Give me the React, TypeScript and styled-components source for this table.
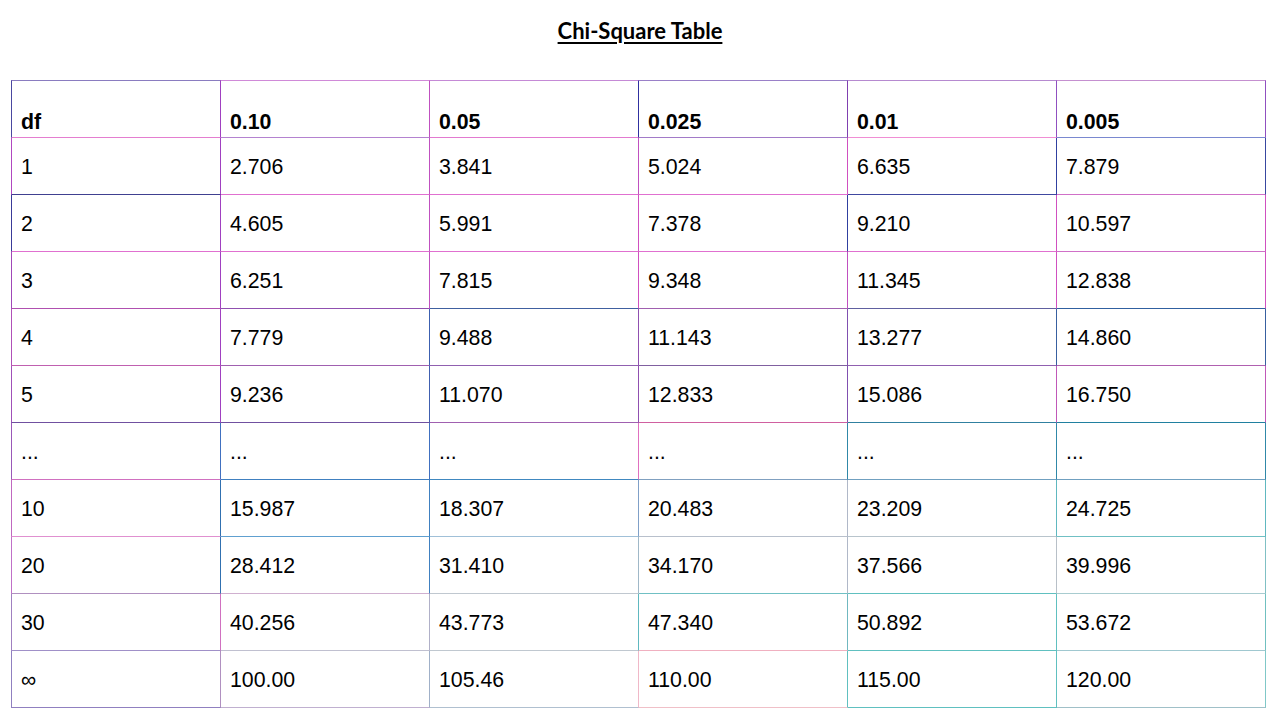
import React from "react";
import styled, { createGlobalStyle } from "styled-components";

const Global = createGlobalStyle`
  html, body { margin: 0; padding: 0; background: #ffffff; }
  body { width: 1280px; height: 720px; overflow: hidden; }
`;

const Page = styled.div`
  width: 1280px;
  height: 720px;
  display: flex;
  flex-direction: column;
  align-items: flex-start;
  background: #fff;
`;

const Title = styled.h1`
  align-self: center;
  margin: 17px 0 0 0;
  height: 28px;
  font-family: "Lato", "Open Sans", sans-serif;
  font-weight: 700;
  font-size: 22px;
  line-height: 28px;
  color: #000;
  text-decoration: underline;
  text-decoration-thickness: 2px;
  text-underline-offset: 3px;
`;

const Grid = styled.div`
  margin: 35px 0 0 11px;
  display: grid;
  grid-template-columns: 210px repeat(5, 209px);
  grid-template-rows: 58px repeat(10, 57px);
`;

const Cell = styled.div<{
  $right: string;
  $bottom: string;
  $left?: string;
  $top?: string;
  $head?: boolean;
}>`
  box-sizing: border-box;
  display: flex;
  align-items: ${(p) => (p.$head ? "flex-end" : "center")};
  padding: ${(p) => (p.$head ? "0 0 2px 9px" : "2px 0 0 9px")};
  border-right: 1px solid ${(p) => p.$right};
  border-bottom: 1px solid ${(p) => p.$bottom};
  border-left: ${(p) => (p.$left ? `1px solid ${p.$left}` : "none")};
  border-top: ${(p) => (p.$top ? `1px solid ${p.$top}` : "none")};
  font-family: "Liberation Sans", Arial, sans-serif;
  font-size: 21.3px;
  font-weight: ${(p) => (p.$head ? 700 : 400)};
  color: #000;
  white-space: nowrap;
`;

const data: string[][] = [
  ["df", "0.10", "0.05", "0.025", "0.01", "0.005"],
  ["1", "2.706", "3.841", "5.024", "6.635", "7.879"],
  ["2", "4.605", "5.991", "7.378", "9.210", "10.597"],
  ["3", "6.251", "7.815", "9.348", "11.345", "12.838"],
  ["4", "7.779", "9.488", "11.143", "13.277", "14.860"],
  ["5", "9.236", "11.070", "12.833", "15.086", "16.750"],
  ["...", "...", "...", "...", "...", "..."],
  ["10", "15.987", "18.307", "20.483", "23.209", "24.725"],
  ["20", "28.412", "31.410", "34.170", "37.566", "39.996"],
  ["30", "40.256", "43.773", "47.340", "50.892", "53.672"],
  ["\u221E", "100.00", "105.46", "110.00", "115.00", "120.00"],
];

// top border colours of the header row
const TOP = ["#8a7cc0", "#d08ad8", "#c58ad6", "#9a80c8", "#b68ad0", "#c590d0"];

// left border colours of first column per row
const LEFT = [
  "#4a48a0", "#b048c0", "#3a3a98", "#a048b8", "#b050b8",
  "#a050b8", "#9a58b8", "#c068c0", "#c070c8", "#a080c0", "#9080c0",
];

// bottom border colours, per row, per column
const BOTTOM = [
  ["#e47ed0", "#b482d0", "#e27ad0", "#a27ac8", "#f08ed4", "#7a88d0"],
  ["#404090", "#e070d0", "#e070d0", "#e070d0", "#4048a0", "#d070c8"],
  ["#e070d0", "#e070d0", "#e070d0", "#e070d0", "#e070d0", "#d070c8"],
  ["#b050b0", "#9050b0", "#4060a0", "#a060b0", "#6060a0", "#3060a0"],
  ["#c060b0", "#a060b0", "#9060b0", "#8060a0", "#9060b0", "#b060b0"],
  ["#7050a0", "#7050a0", "#a060b0", "#d060a0", "#3080a0", "#2080a0"],
  ["#d070c0", "#4080c0", "#4088c0", "#80a0c0", "#70a0c0", "#70a0c0"],
  ["#e090d0", "#60a0d0", "#a0c0d8", "#b8c0cc", "#b8c4cc", "#70c0c4"],
  ["#b090c0", "#d0b0d0", "#c0c8d0", "#70c0c4", "#60c0c0", "#a8ccd0"],
  ["#a090c8", "#c0c0d0", "#c0c8d0", "#f0b0c0", "#60c0c0", "#a0c8d0"],
  ["#9080c0", "#c0b0d0", "#b0c0d0", "#f0c0c8", "#60c0c0", "#a0c0c8"],
];

// right border colours, per row, per column
const RIGHT = [
  ["#a040c0", "#c050c0", "#3030a0", "#8040b0", "#9050c0", "#9050c0"],
  ["#a040c0", "#c050c0", "#c050c0", "#d050c0", "#3040a0", "#3848a0"],
  ["#a040c0", "#c050c0", "#d050c0", "#3040a0", "#d050c0", "#d050c0"],
  ["#a040c0", "#c050c0", "#d050c0", "#c050c0", "#d050c0", "#d050c0"],
  ["#a040c0", "#3c60b0", "#9050b0", "#8050b0", "#3860a0", "#3860a0"],
  ["#a040c0", "#4060b0", "#9050b0", "#8050b0", "#c058b8", "#c058b8"],
  ["#4070c0", "#4070c0", "#e070c0", "#3088a8", "#3088a8", "#3088a8"],
  ["#3070b0", "#4080c0", "#80a0c8", "#b0b8c8", "#60b8c0", "#60b8c0"],
  ["#3070b0", "#4080c0", "#a0b8c8", "#b0b8c8", "#b8c0c8", "#80c0c4"],
  ["#d070c0", "#b0b0c8", "#60b8c0", "#70b8c0", "#60c0c0", "#70c0c0"],
  ["#b090c0", "#a0b0c8", "#f0b8c8", "#60c0c0", "#60c0c0", "#80c8c8"],
];

export default function App() {
  return (
    <Page>
      <Global />
      <Title>Chi-Square Table</Title>
      <Grid>
        {data.map((row, r) =>
          row.map((text, c) => (
            <Cell
              key={`${r}-${c}`}
              $head={r === 0}
              $right={RIGHT[r][c]}
              $bottom={BOTTOM[r][c]}
              $left={c === 0 ? LEFT[r] : undefined}
              $top={r === 0 ? TOP[c] : undefined}
            >
              {text}
            </Cell>
          ))
        )}
      </Grid>
    </Page>
  );
}
